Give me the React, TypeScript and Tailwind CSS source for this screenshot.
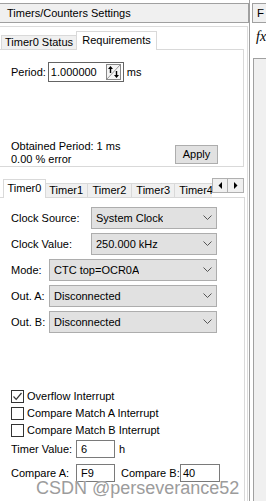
import React from "react";

const font = { fontFamily: '"Liberation Sans", Arial, sans-serif' };

function Chevron() {
  return (
    <svg width="9" height="6" viewBox="0 0 9 6" className="shrink-0">
      <path d="M0.5 0.5 L4.5 4.5 L8.5 0.5" fill="none" stroke="#555" strokeWidth="1" />
    </svg>
  );
}

function Select({ value, w }: { value: string; w: string }) {
  return (
    <div className={`${w} h-[22px] bg-[#e1e1e1] border border-[#adadad] flex items-center justify-between pl-[4px] pr-[4px]`}>
      <span className="truncate">{value}</span>
      <Chevron />
    </div>
  );
}

function Check({ checked }: { checked?: boolean }) {
  return (
    <div className="w-[13px] h-[13px] border border-[#333] bg-white flex items-center justify-center shrink-0">
      {checked && (
        <svg width="11" height="11" viewBox="0 0 11 11">
          <path d="M1.5 5.5 L4.2 8.3 L9.5 2" fill="none" stroke="#333" strokeWidth="1.2" />
        </svg>
      )}
    </div>
  );
}

function Spinner() {
  return (
    <svg width="15" height="16" viewBox="0 0 15 16" className="shrink-0">
      <rect x="0.5" y="0.5" width="14" height="15" fill="#f4f4f4" stroke="#888" />
      <path d="M1 15 L14 1" stroke="#999" strokeWidth="1" />
      <path d="M4.5 2 L2 5 H3.8 V9 H5.2 V5 H7 Z" fill="#000" />
      <path d="M10.5 14 L8 11 H9.8 V7 H11.2 V11 H13 Z" fill="#000" />
    </svg>
  );
}

export default function App() {
  return (
    <div className="relative w-[266px] h-[501px] bg-white flex overflow-hidden text-[11px] text-black leading-[13px]" style={font}>
      {/* Left panel */}
      <div className="w-[249px] flex flex-col shrink-0">
        <div className="mt-[3px] h-[20px] bg-[#f0f0f0] border-y border-r border-[#a0a0a0] flex items-center pl-[7px] text-[11px]">
          Timers/Counters Settings
        </div>
        <div className="mt-[3px] flex-1 border-t border-r border-[#dcdcdc] mr-[1px] flex flex-col pr-[3px] pt-[3px]">
          {/* Tabs row 1 */}
          <div className="flex items-end h-[19px] pl-[1px]">
            <div className="h-[14px] w-[75px] bg-[#f0f0f0] border-t border-l border-[#d9d9d9] flex items-center justify-center">
              Timer0 Status
            </div>
            <div className="h-[19px] w-[81px] bg-white border-t border-x border-[#d9d9d9] -mb-px relative z-10 flex items-center justify-center pb-[2px]">
              Requirements
            </div>
          </div>
          <div className="h-[118px] border-y border-r border-[#d9d9d9] flex flex-col pl-[11px]">
            <div className="flex items-center mt-[12px]">
              <span>Period:</span>
              <div className="ml-[2px] w-[76px] h-[20px] border border-[#646464] flex items-center justify-between pl-[2px] pr-[2px]">
                <span>1.000000</span>
                <Spinner />
              </div>
              <span className="ml-[3px]">ms</span>
            </div>
            <div className="mt-[58px] flex items-end justify-between pr-[25px]">
              <div className="flex flex-col">
                <span>Obtained Period: 1 ms</span>
                <span>0.00 % error</span>
              </div>
              <div className="w-[43px] h-[19px] bg-[#e1e1e1] border border-[#adadad] flex items-center justify-center mb-[2px]">
                Apply
              </div>
            </div>
          </div>

          {/* Tabs row 2 */}
          <div className="mt-[11px] flex items-end h-[19px] pl-[3px]">
            <div className="h-[19px] w-[43px] bg-white border-t border-x border-[#d9d9d9] -mb-px relative z-10 flex items-center justify-center pb-[2px]">
              Timer0
            </div>
            <div className="h-[14px] w-[42px] bg-[#f0f0f0] border-t border-r border-[#d9d9d9] flex items-center justify-center">
              Timer1
            </div>
            <div className="h-[14px] w-[45px] bg-[#f0f0f0] border-t border-r border-[#d9d9d9] flex items-center justify-center">
              Timer2
            </div>
            <div className="h-[14px] w-[43px] bg-[#f0f0f0] border-t border-r border-[#d9d9d9] flex items-center justify-center">
              Timer3
            </div>
            <div className="h-[14px] w-[37px] bg-[#f0f0f0] border-t border-[#d9d9d9] flex items-center pl-[4px] overflow-hidden whitespace-nowrap">
              Timer4
            </div>
            <div className="self-start flex h-[15px]">
              <div className="w-[16px] h-[15px] bg-[#f0f0f0] border border-[#b0b0b0] flex items-center justify-center">
                <svg width="4" height="7" viewBox="0 0 4 7"><path d="M4 0 L0.5 3.5 L4 7 Z" fill="#000" /></svg>
              </div>
              <div className="w-[16px] h-[15px] bg-[#f0f0f0] border-y border-r border-[#b0b0b0] flex items-center justify-center">
                <svg width="4" height="7" viewBox="0 0 4 7"><path d="M0 0 L3.5 3.5 L0 7 Z" fill="#000" /></svg>
              </div>
            </div>
          </div>
          <div className="flex-1 border-t border-r border-[#d9d9d9] mr-[-1px] flex flex-col pl-[11px]">
            <div className="mt-[9px] flex flex-col gap-[4px]">
              <div className="flex items-center">
                <span className="w-[80px]">Clock Source:</span>
                <Select value="System Clock" w="w-[126px]" />
              </div>
              <div className="flex items-center">
                <span className="w-[80px]">Clock Value:</span>
                <Select value="250.000 kHz" w="w-[126px]" />
              </div>
              <div className="flex items-center">
                <span className="w-[38px]">Mode:</span>
                <Select value="CTC top=OCR0A" w="w-[168px]" />
              </div>
              <div className="flex items-center">
                <span className="w-[38px]">Out. A:</span>
                <Select value="Disconnected" w="w-[168px]" />
              </div>
              <div className="flex items-center">
                <span className="w-[38px]">Out. B:</span>
                <Select value="Disconnected" w="w-[168px]" />
              </div>
            </div>

            <div className="mt-[57px] flex flex-col gap-[4px]">
              <div className="flex items-center gap-[3px]">
                <Check checked />
                <span>Overflow Interrupt</span>
              </div>
              <div className="flex items-center gap-[3px]">
                <Check />
                <span>Compare Match A Interrupt</span>
              </div>
              <div className="flex items-center gap-[3px]">
                <Check />
                <span>Compare Match B Interrupt</span>
              </div>
            </div>
            <div className="mt-[3px] flex items-center">
              <span className="w-[65px]">Timer Value:</span>
              <div className="w-[39px] h-[18px] border border-[#7a7a7a] flex items-center pl-[4px]">6</div>
              <span className="ml-[4px]">h</span>
            </div>
            <div className="mt-[6px] flex items-center">
              <span className="w-[65px]">Compare A:</span>
              <div className="w-[39px] h-[18px] border border-[#7a7a7a] flex items-center pl-[4px]">F9</div>
              <span className="ml-[6px] w-[59px]">Compare B:</span>
              <div className="w-[40px] h-[18px] border border-[#7a7a7a] flex items-center pl-[2px]">40</div>
            </div>
          </div>
        </div>
      </div>

      {/* Right panel */}
      <div className="flex-1 border-l border-[#a0a0a0] flex flex-col pl-[2px]">
        <div className="mt-[3px] h-[20px] bg-[#f0f0f0] border-y border-l border-[#a0a0a0] flex items-center pl-[4px] text-[11.5px]">
          F
        </div>
        <div className="mt-[7px] pl-[4px] italic text-[14px] leading-[14px]" style={{ fontFamily: '"Liberation Serif", serif' }}>
          fx
        </div>
        <div className="mt-[14px] ml-[1px] flex-1 bg-[#f0f0f0] border-t border-l border-[#a0a0a0]" />
      </div>

      {/* Watermark */}
      <div
        className="absolute left-[36px] top-[478px] text-[18px] leading-[20px] text-[#9c9c9c] whitespace-nowrap pointer-events-none"
        style={{ fontFamily: '"Liberation Sans", Arial, sans-serif', textShadow: "0 0 1px #fff" }}
      >
        CSDN @perseverance52
      </div>
    </div>
  );
}
